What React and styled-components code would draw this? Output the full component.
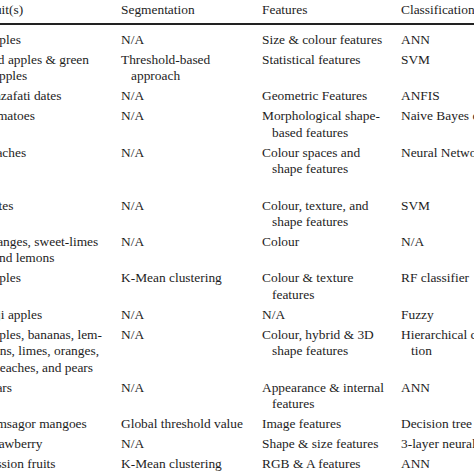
import React from "react";
import styled, { createGlobalStyle } from "styled-components";

const GlobalStyle = createGlobalStyle`
  html, body {
    margin: 0;
    padding: 0;
    background: #ffffff;
  }
`;

const StyledPage = styled.div`
  width: 474px;
  height: 474px;
  overflow: hidden;
  background: #ffffff;
  color: #1d1d1d;
  font-family: "Liberation Serif", "Times New Roman", serif;
  font-size: 13.4px;
  line-height: 16.4px;
`;

const StyledTable = styled.div`
  margin-left: -17px;
  padding-top: 2px;
  width: 560px;
`;

const StyledRow = styled.div`
  display: grid;
  grid-template-columns: 138px 141px 139px 1fr;
  padding: 1.8px 0;
`;

const StyledHeadRow = styled(StyledRow)`
  padding: 0 0 4.4px;
  border-bottom: 2px solid #222222;
  margin-bottom: 5.4px;
`;

const StyledCell = styled.div`
  display: flex;
  flex-direction: column;
  white-space: nowrap;
`;

const StyledLine = styled.span`
  display: block;
  padding-left: ${(props) => (props.$cont ? "10px" : "0")};
`;

const headers = ["Fruit(s)", "Segmentation", "Features", "Classification"];

const rows = [
  [["Apples"], ["N/A"], ["Size & colour features"], ["ANN"]],
  [
    ["Red apples & green", "apples"],
    ["Threshold-based", "approach"],
    ["Statistical features"],
    ["SVM"],
  ],
  [["Mazafati dates"], ["N/A"], ["Geometric Features"], ["ANFIS"]],
  [
    ["Tomatoes"],
    ["N/A"],
    ["Morphological shape-", "based features"],
    ["Naive Bayes classifier"],
  ],
  [
    ["Peaches", "\u00a0", "\u00a0"],
    ["N/A"],
    ["Colour spaces and", "shape features"],
    ["Neural Network"],
  ],
  [["Dates"], ["N/A"], ["Colour, texture, and", "shape features"], ["SVM"]],
  [["Oranges, sweet-limes", "and lemons"], ["N/A"], ["Colour"], ["N/A"]],
  [
    ["Apples"],
    ["K-Mean clustering"],
    ["Colour & texture", "features"],
    ["RF classifier"],
  ],
  [["Fuji apples"], ["N/A"], ["N/A"], ["Fuzzy"]],
  [
    ["Apples, bananas, lem-", "ons, limes, oranges,", "peaches, and pears"],
    ["N/A"],
    ["Colour, hybrid & 3D", "shape features"],
    ["Hierarchical classifica-", "tion"],
  ],
  [["Pears"], ["N/A"], ["Appearance & internal", "features"], ["ANN"]],
  [
    ["Himsagor mangoes"],
    ["Global threshold value"],
    ["Image features"],
    ["Decision tree"],
  ],
  [["Strawberry"], ["N/A"], ["Shape & size features"], ["3-layer neural network"]],
  [["Passion fruits"], ["K-Mean clustering"], ["RGB & A features"], ["ANN"]],
];

const Cell = ({ lines }) => (
  <StyledCell>
    {lines.map((line, i) => (
      <StyledLine key={i} $cont={i > 0}>
        {line}
      </StyledLine>
    ))}
  </StyledCell>
);

const App = () => {
  return (
    <StyledPage>
      <GlobalStyle />
      <StyledTable>
        <StyledHeadRow>
          {headers.map((h) => (
            <Cell key={h} lines={[h]} />
          ))}
        </StyledHeadRow>
        {rows.map((row, i) => (
          <StyledRow key={i}>
            {row.map((lines, j) => (
              <Cell key={j} lines={lines} />
            ))}
          </StyledRow>
        ))}
      </StyledTable>
    </StyledPage>
  );
};

export default App;
